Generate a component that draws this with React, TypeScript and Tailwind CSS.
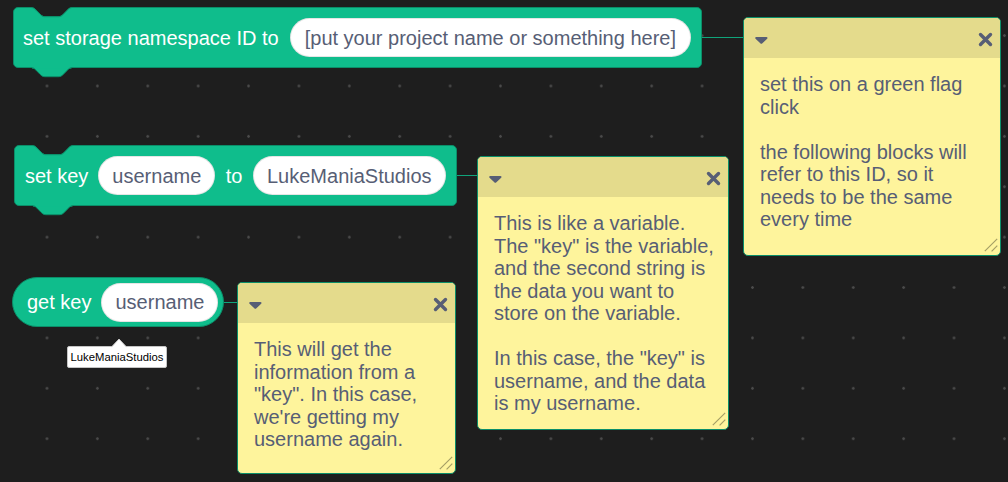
const GREEN = '#0fbd8c';
const DARK = '#0b8e69';
const BG = '#1e1e1e';

// scratch-style notch, scaled 1.15
const NOTCH =
  'M0,0 c2.3,0 3.45,1.15 4.6,2.3 l4.6,4.6 c1.15,1.15 2.3,2.3 4.6,2.3 h13.8 c2.3,0 3.45,-1.15 4.6,-2.3 l4.6,-4.6 c1.15,-1.15 2.3,-2.3 4.6,-2.3';

function NotchTop() {
  return (
    <svg className="absolute left-[17px] top-[-1px]" width="42" height="11" viewBox="0 0 42 11">
      <path d={NOTCH + ' z'} fill={BG} />
      <path d={NOTCH} fill="none" stroke={DARK} strokeWidth="1" transform="translate(0 0.5)" />
    </svg>
  );
}

function NotchBottom() {
  return (
    <svg className="absolute left-[17px] top-full" width="42" height="12" viewBox="0 0 42 12">
      <path d={NOTCH + ' z'} fill={GREEN} transform="translate(0 0.5)" />
      <rect x="1" y="0" width="39.4" height="1.5" fill={GREEN} />
      <path d={NOTCH} fill="none" stroke={DARK} strokeWidth="1" transform="translate(0 0.5)" />
    </svg>
  );
}

function Input({ children, wide }: { children: string; wide?: boolean }) {
  return (
    <span
      className={`h-[39px] ${wide ? 'px-[14px]' : 'px-[13px]'} rounded-full bg-white border border-black/10 flex items-center text-[#575e75] whitespace-nowrap`}
    >
      {children}
    </span>
  );
}

function Line({ className }: { className: string }) {
  return <div className={`absolute h-px bg-[#10a47b] ${className}`} />;
}

interface CommentProps {
  className: string;
  text: string;
}

function Comment({ className, text }: CommentProps) {
  return (
    <div
      className={`absolute rounded-[5px] border border-[#0b8e69] bg-[#fef49c] overflow-hidden flex flex-col ${className}`}
    >
      <div className="h-[40px] shrink-0 bg-[#e4db8c] flex items-center justify-between pl-[10px] pr-[7px]">
        <svg width="14" height="8" viewBox="0 0 14 8" className="translate-y-[2px]">
          <path d="M1.5,1 h11 a1,1 0 0 1 0.7,1.7 l-4.8,4.5 a1.5,1.5 0 0 1 -2.1,0 l-4.8,-4.5 a1,1 0 0 1 0.7,-1.7 z" fill="#575e75" />
        </svg>
        <svg width="15" height="15" viewBox="0 0 15 15" className="translate-y-[1px]">
          <path d="M2.5,2.5 L12.5,12.5 M12.5,2.5 L2.5,12.5" stroke="#575e75" strokeWidth="3.4" strokeLinecap="round" />
        </svg>
      </div>
      <div className="pl-[16px] pr-[8px] pt-[15px] text-[20px] leading-[22.5px] text-[#575e75] whitespace-pre-line">
        {text}
      </div>
      <svg className="absolute right-[2px] bottom-[3px]" width="14" height="14" viewBox="0 0 14 14">
        <path d="M0.8,13.2 L13.2,0.8 M7.6,13.4 L13.3,7.6" stroke="#000" strokeOpacity="0.35" strokeWidth="1.2" />
      </svg>
    </div>
  );
}

export default function App() {
  return (
    <div className="relative w-[1008px] h-[482px] overflow-hidden bg-[#1e1e1e] bg-[radial-gradient(circle,#4a4a4a_1px,transparent_1.6px)] bg-[length:50.4px_50.4px] bg-[position:21.8px_10.4px] font-['Liberation_Sans',Arial,sans-serif]">
      {/* connectors */}
      <Line className="left-[701px] top-[37px] w-[42px]" />
      <Line className="left-[455px] top-[175px] w-[22px]" />
      <Line className="left-[224px] top-[302px] w-[13px]" />

      {/* set storage namespace */}
      <div className="absolute left-[13px] top-[7px] h-[61px] flex items-center gap-[11px] pl-[9px] pr-[10px] rounded-[5px] border border-[#0b8e69] bg-[#0fbd8c] text-white text-[20px] whitespace-nowrap">
        <NotchTop />
        <NotchBottom />
        <span>set storage namespace ID to</span>
        <Input wide>[put your project name or something here]</Input>
      </div>

      {/* set key */}
      <div className="absolute left-[14px] top-[145px] h-[61px] flex items-center gap-[10px] pl-[10px] pr-[10px] rounded-[5px] border border-[#0b8e69] bg-[#0fbd8c] text-white text-[20px] whitespace-nowrap">
        <NotchTop />
        <NotchBottom />
        <span>set key</span>
        <Input>username</Input>
        <span className="px-[0.5px]">to</span>
        <Input>LukeManiaStudios</Input>
      </div>

      {/* get key reporter */}
      <div className="absolute left-[12px] top-[277px] h-[50px] flex items-center gap-[10px] pl-[14px] pr-[5px] rounded-full border border-[#0b8e69] bg-[#0fbd8c] text-white text-[20px] whitespace-nowrap">
        <span>get key</span>
        <Input>username</Input>
      </div>

      {/* value tooltip */}
      <div className="absolute left-[67px] top-[346px] w-[100px] h-[22px] flex items-center justify-center bg-white border border-[#c4c4c4] rounded-[2px] text-[11.3px] text-black">
        <svg className="absolute left-[43px] top-[-9px]" width="16" height="10" viewBox="0 0 16 10">
          <path d="M0,9.5 L8,1 L16,9.5" fill="#fff" stroke="#c4c4c4" strokeWidth="1" />
          <rect x="0" y="9.3" width="16" height="1" fill="#fff" />
        </svg>
        LukeManiaStudios
      </div>

      <Comment
        className="left-[743px] top-[17px] w-[258px] h-[239px]"
        text={'set this on a green flag click\n\nthe following blocks will refer to this ID, so it needs to be the same every time'}
      />
      <Comment
        className="left-[477px] top-[156px] w-[252px] h-[274px]"
        text={'This is like a variable. The "key" is the variable, and the second string is the data you want to store on the variable.\n\nIn this case, the "key" is username, and the data is my username.'}
      />
      <Comment
        className="left-[237px] top-[282px] w-[219px] h-[192px]"
        text={'This will get the information from a "key". In this case, we\'re getting my username again.'}
      />
    </div>
  );
}
